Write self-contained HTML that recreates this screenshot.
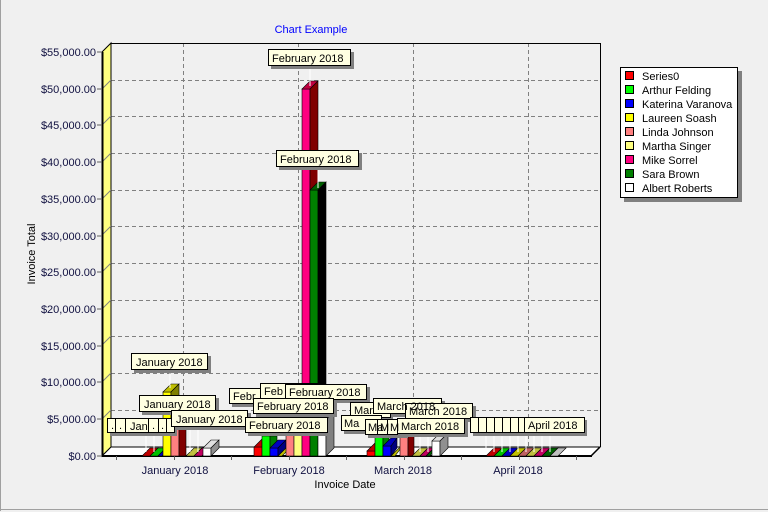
<!DOCTYPE html>
<html><head><meta charset="utf-8"><style>
html,body{margin:0;padding:0;background:#f0f0f0;}
svg{display:block;font-family:"Liberation Sans",sans-serif;}
</style></head><body>
<svg width="768" height="512" viewBox="0 0 768 512" xmlns="http://www.w3.org/2000/svg">
<defs>
<g id="dummy"></g>
</defs>
<rect x="0" y="0" width="768" height="512" fill="#f0f0f0"/>
<line x1="0.5" y1="0" x2="0.5" y2="511" stroke="#a0a0a0"/>
<line x1="0" y1="509.5" x2="768" y2="509.5" stroke="#a0a0a0"/>
<text x="311" y="33" font-size="11" fill="#0000ff" text-anchor="middle">Chart Example</text>

<!-- back wall grid -->
<g stroke="#808080" stroke-dasharray="4,3" stroke-width="1">
<line x1="111" y1="410.5" x2="600" y2="410.5"/>
<line x1="111" y1="373.5" x2="600" y2="373.5"/>
<line x1="111" y1="336.5" x2="600" y2="336.5"/>
<line x1="111" y1="300.5" x2="600" y2="300.5"/>
<line x1="111" y1="263.5" x2="600" y2="263.5"/>
<line x1="111" y1="226.5" x2="600" y2="226.5"/>
<line x1="111" y1="190.5" x2="600" y2="190.5"/>
<line x1="111" y1="153.5" x2="600" y2="153.5"/>
<line x1="111" y1="116.5" x2="600" y2="116.5"/>
<line x1="111" y1="80.5" x2="600" y2="80.5"/>
<line x1="183.5" y1="43" x2="183.5" y2="447"/>
<line x1="298.5" y1="43" x2="298.5" y2="447"/>
<line x1="413.5" y1="43" x2="413.5" y2="447"/>
<line x1="528.5" y1="43" x2="528.5" y2="447"/>
</g>
<line x1="111" y1="43.5" x2="600" y2="43.5" stroke="#000"/>
<line x1="600.5" y1="43" x2="600.5" y2="447" stroke="#000"/>
<!-- left wall -->
<polygon points="102,52 111,43 111,447 102,456" fill="#ffff80" stroke="#000" stroke-width="1"/>
<g stroke="#808080" stroke-width="1">
<line x1="102" y1="419" x2="111" y2="410"/><line x1="102" y1="382" x2="111" y2="373"/>
<line x1="102" y1="345" x2="111" y2="336"/><line x1="102" y1="309" x2="111" y2="300"/>
<line x1="102" y1="272" x2="111" y2="263"/><line x1="102" y1="235" x2="111" y2="226"/>
<line x1="102" y1="199" x2="111" y2="190"/><line x1="102" y1="162" x2="111" y2="153"/>
<line x1="102" y1="125" x2="111" y2="116"/><line x1="102" y1="89" x2="111" y2="80"/>
</g>
<line x1="102.5" y1="52" x2="102.5" y2="457" stroke="#000" stroke-width="2"/>
<!-- floor -->
<polygon points="102,456 111,447 600,447 591,456" fill="#fff" stroke="#000"/>
<line x1="102" y1="456" x2="592" y2="456" stroke="#000" stroke-width="2"/>
<line x1="591" y1="456" x2="600" y2="447" stroke="#000" stroke-width="1.5"/>

<!-- y axis labels -->
<g font-size="11" fill="#101040" text-anchor="end">
<text x="96" y="460">$0.00</text>
<text x="96" y="423">$5,000.00</text>
<text x="96" y="386">$10,000.00</text>
<text x="96" y="350">$15,000.00</text>
<text x="96" y="313">$20,000.00</text>
<text x="96" y="276">$25,000.00</text>
<text x="96" y="240">$30,000.00</text>
<text x="96" y="203">$35,000.00</text>
<text x="96" y="166">$40,000.00</text>
<text x="96" y="129">$45,000.00</text>
<text x="96" y="93">$50,000.00</text>
<text x="96" y="56">$55,000.00</text>
</g>
<g stroke="#606060">
<line x1="97" y1="456" x2="102" y2="456"/><line x1="97" y1="419" x2="102" y2="419"/>
<line x1="97" y1="382" x2="102" y2="382"/><line x1="97" y1="346" x2="102" y2="346"/>
<line x1="97" y1="309" x2="102" y2="309"/><line x1="97" y1="272" x2="102" y2="272"/>
<line x1="97" y1="236" x2="102" y2="236"/><line x1="97" y1="199" x2="102" y2="199"/>
<line x1="97" y1="162" x2="102" y2="162"/><line x1="97" y1="125" x2="102" y2="125"/>
<line x1="97" y1="89" x2="102" y2="89"/><line x1="97" y1="52" x2="102" y2="52"/>
<line x1="116.5" y1="456" x2="116.5" y2="460"/><line x1="174.5" y1="456" x2="174.5" y2="460"/>
<line x1="231.5" y1="456" x2="231.5" y2="460"/><line x1="289.5" y1="456" x2="289.5" y2="460"/>
<line x1="346.5" y1="456" x2="346.5" y2="460"/><line x1="404.5" y1="456" x2="404.5" y2="460"/>
<line x1="461.5" y1="456" x2="461.5" y2="460"/><line x1="519.5" y1="456" x2="519.5" y2="460"/>
<line x1="576.5" y1="456" x2="576.5" y2="460"/>
</g>
<g font-size="11" fill="#101040" text-anchor="middle">
<text x="175" y="474">January 2018</text>
<text x="289" y="474">February 2018</text>
<text x="403" y="474">March 2018</text>
<text x="518" y="474">April 2018</text>
<text x="345" y="488" fill="#000">Invoice Date</text>
</g>
<text transform="translate(35,254) rotate(-90)" font-size="11" text-anchor="middle" fill="#000">Invoice Total</text>

<!-- Bars: front rect, side, top -->
<g stroke="#000" stroke-width="0.6">
<!-- January stubs -->
<polygon points="142,456 150,448 158,448 150,456" fill="#c00000"/>
<polygon points="150,456 158,448 166,448 158,456" fill="#00c000"/>
<polygon points="158,456 166,448 170,448 162,456" fill="#0000c0"/>
<!-- Jan yellow tall -->
<rect x="163" y="392" width="8" height="64" fill="#ffff00"/>
<polygon points="163,392 171,384 179,384 171,392" fill="#c0c000"/>
<polygon points="171,392 179,384 179,448 171,456" fill="#808000"/>
<!-- Jan pink -->
<rect x="171" y="428" width="8" height="28" fill="#ff8080"/>
<rect x="179" y="420" width="7" height="36" fill="#800000"/>
<polygon points="186,456 194,448 202,448 194,456" fill="#c0c040"/>
<polygon points="194,456 202,448 210,448 202,456" fill="#c00060"/>
<polygon points="202,456 208,450 214,448 206,456" fill="#006000"/>
<!-- Jan white -->
<rect x="203" y="448" width="8" height="8" fill="#fff"/>
<polygon points="203,448 211,440 219,440 211,448" fill="#e0e0e0"/>
<polygon points="211,448 219,440 219,448 211,456" fill="#909090"/>

<!-- February -->
<rect x="254" y="447" width="8" height="9" fill="#ff0000"/>
<polygon points="254,447 262,439 262,447" fill="#c00000"/>
<rect x="262" y="436" width="8" height="20" fill="#00ff00"/>
<rect x="270" y="436" width="7" height="20" fill="#008000"/>
<rect x="270" y="448" width="8" height="8" fill="#0000ff"/>
<polygon points="270,448 278,440 286,440 278,448" fill="#0000c0"/>
<polygon points="278,456 286,448 286,440 278,448" fill="#000080"/>
<polygon points="278,456 286,448 290,448 282,456" fill="#c0c000"/>
<rect x="286" y="434" width="8" height="22" fill="#ff8080"/>
<rect x="294" y="434" width="8" height="22" fill="#ffff80"/>
<!-- Mike magenta tall -->
<rect x="302" y="89" width="8" height="367" fill="#ff0080"/>
<polygon points="302,89 310,81 318,81 310,89" fill="#c00040"/>
<polygon points="310,89 318,81 318,448 310,456" fill="#800000"/>
<!-- Sara green -->
<rect x="310" y="190" width="8" height="266" fill="#008000"/>
<polygon points="310,190 318,182 326,182 318,190" fill="#006000"/>
<polygon points="318,190 326,182 326,448 318,456" fill="#000"/>
<!-- white -->
<rect x="318" y="420" width="8" height="36" fill="#fff"/>
<polygon points="326,420 334,412 334,448 326,456" fill="#808080"/>

<!-- March -->
<rect x="367" y="451" width="8" height="5" fill="#ff0000"/>
<polygon points="367,451 375,443 375,451" fill="#c00000"/>
<rect x="375" y="435" width="8" height="21" fill="#00ff00"/>
<rect x="383" y="435" width="6" height="21" fill="#008000"/>
<rect x="383" y="446" width="8" height="10" fill="#0000ff"/>
<polygon points="383,446 391,438 397,438 391,446" fill="#0000c0"/>
<polygon points="391,446 397,438 397,448 391,456" fill="#000080"/>
<polygon points="391,456 399,448 401,448 395,456" fill="#c0c000"/>
<rect x="400" y="432" width="8" height="24" fill="#ff8080"/>
<polygon points="400,432 408,424 414,424 408,432" fill="#c06060"/>
<rect x="408" y="428" width="6" height="28" fill="#800000"/>
<polygon points="412,456 420,448 428,448 420,456" fill="#c0c040"/>
<polygon points="420,456 428,448 434,448 426,456" fill="#c00060"/>
<polygon points="426,456 432,450 436,448 430,456" fill="#006000"/>
<rect x="432" y="441" width="8" height="15" fill="#fff"/>
<polygon points="432,441 440,433 448,433 440,441" fill="#e0e0e0"/>
<polygon points="440,441 448,433 448,448 440,456" fill="#909090"/>

<!-- April stubs -->
<polygon points="486,456 494,448 502,448 494,456" fill="#c00000"/>
<polygon points="494,456 502,448 510,448 502,456" fill="#00c000"/>
<polygon points="502,456 510,448 518,448 510,456" fill="#0000c0"/>
<polygon points="510,456 518,448 526,448 518,456" fill="#c0c000"/>
<polygon points="518,456 526,448 534,448 526,456" fill="#c06060"/>
<polygon points="526,456 534,448 542,448 534,456" fill="#c0c040"/>
<polygon points="534,456 542,448 550,448 542,456" fill="#c00060"/>
<polygon points="542,456 550,448 558,448 550,456" fill="#006000"/>
<polygon points="550,456 558,448 566,448 558,456" fill="#c0c0c0"/>
</g>

<!-- leader lines -->
<g stroke="#fff" stroke-width="1">
<line x1="310" y1="66" x2="310" y2="86"/>
<line x1="318" y1="167" x2="318" y2="188"/>
<line x1="170" y1="370" x2="170" y2="388"/>
<line x1="146" y1="432" x2="146" y2="452"/><line x1="154" y1="432" x2="154" y2="452"/>
<line x1="190" y1="427" x2="190" y2="452"/><line x1="198" y1="427" x2="198" y2="452"/>
<line x1="486" y1="433" x2="486" y2="452"/><line x1="494" y1="433" x2="494" y2="452"/>
<line x1="502" y1="433" x2="502" y2="452"/><line x1="510" y1="433" x2="510" y2="452"/>
<line x1="518" y1="433" x2="518" y2="452"/><line x1="526" y1="433" x2="526" y2="452"/>
<line x1="534" y1="433" x2="534" y2="452"/><line x1="542" y1="433" x2="542" y2="452"/>
<line x1="550" y1="433" x2="550" y2="452"/>
<line x1="420" y1="434" x2="420" y2="452"/><line x1="428" y1="434" x2="428" y2="452"/>
</g>

<!-- label boxes -->
<g font-size="11" fill="#000">
<g fill="#808080">
<rect x="110" y="421" width="8" height="15"/><rect x="118" y="421" width="10" height="15"/>
<rect x="128" y="421" width="23" height="15"/><rect x="151" y="421" width="10" height="15"/>
<rect x="161" y="421" width="8" height="15"/><rect x="169" y="421" width="8" height="15"/>
<rect x="134" y="356" width="77" height="17"/>
<rect x="142" y="398" width="77" height="17"/>
<rect x="174" y="413" width="77" height="17"/>
<rect x="271" y="52" width="83" height="17"/>
<rect x="279" y="153" width="83" height="17"/>
<rect x="232" y="391" width="60" height="16"/>
<rect x="263" y="386" width="60" height="16"/>
<rect x="288" y="387" width="82" height="16"/>
<rect x="256" y="401" width="81" height="16"/>
<rect x="248" y="420" width="83" height="16"/>
<rect x="353" y="405" width="40" height="16"/>
<rect x="344" y="418" width="40" height="16"/>
<rect x="376" y="401" width="69" height="16"/>
<rect x="408" y="406" width="68" height="16"/>
<rect x="368" y="422" width="40" height="16"/>
<rect x="400" y="421" width="68" height="16"/>
<rect x="473" y="420" width="56" height="16"/>
<rect x="527" y="420" width="60" height="16"/>
</g>
<g fill="#ffffe1" stroke="#000" stroke-width="1">
<rect x="107.5" y="418.5" width="8" height="14"/><rect x="115.5" y="418.5" width="10" height="14"/>
<rect x="125.5" y="418.5" width="23" height="14"/><rect x="148.5" y="418.5" width="10" height="14"/>
<rect x="158.5" y="418.5" width="8" height="14"/><rect x="166.5" y="418.5" width="8" height="14"/>
<rect x="131.5" y="353.5" width="76" height="16"/>
<rect x="139.5" y="395.5" width="76" height="16"/>
<rect x="171.5" y="410.5" width="76" height="16"/>
<rect x="268.5" y="49.5" width="82" height="16"/>
<rect x="276.5" y="150.5" width="82" height="16"/>
<rect x="229.5" y="388.5" width="60" height="15"/>
<rect x="260.5" y="383.5" width="60" height="15"/>
<rect x="285.5" y="384.5" width="81" height="15"/>
<rect x="253.5" y="398.5" width="80" height="15"/>
<rect x="245.5" y="417.5" width="82" height="15"/>
<rect x="350.5" y="402.5" width="40" height="15"/>
<rect x="341.5" y="415.5" width="40" height="15"/>
<rect x="373.5" y="398.5" width="68" height="15"/>
<rect x="405.5" y="403.5" width="67" height="15"/>
<rect x="365.5" y="419.5" width="12" height="15"/><rect x="377.5" y="419.5" width="10" height="15"/>
<rect x="387.5" y="419.5" width="10" height="15"/>
<rect x="397.5" y="418.5" width="67" height="15"/>
<rect x="470.5" y="417.5" width="8" height="15"/><rect x="478.5" y="417.5" width="8" height="15"/>
<rect x="486.5" y="417.5" width="8" height="15"/><rect x="494.5" y="417.5" width="8" height="15"/>
<rect x="502.5" y="417.5" width="8" height="15"/><rect x="510.5" y="417.5" width="8" height="15"/>
<rect x="518.5" y="417.5" width="6" height="15"/>
<rect x="524.5" y="417.5" width="60" height="15"/>
</g>
<text x="111" y="429">.</text><text x="119" y="429">.</text>
<text x="130" y="430">Jan</text>
<text x="152" y="429">.</text><text x="161" y="429">.</text>
<text x="136" y="366">January 2018</text>
<text x="144" y="408">January 2018</text>
<text x="176" y="423">January 2018</text>
<text x="272" y="62">February 2018</text>
<text x="280" y="163">February 2018</text>
<text x="233" y="400">Febr</text>
<text x="264" y="395">Feb</text>
<text x="289" y="396">February 2018</text>
<text x="257" y="410">February 2018</text>
<text x="249" y="429">February 2018</text>
<text x="354" y="414">Mar</text>
<text x="344" y="427">Ma</text>
<text x="377" y="410">March 2018</text>
<text x="409" y="415">March 2018</text>
<text x="368" y="431">Ma</text><text x="380" y="431">M</text><text x="390" y="431">M</text>
<text x="401" y="430">March 2018</text>
<text x="528" y="429">April 2018</text>
</g>

<!-- legend -->
<rect x="624" y="71" width="118" height="131" fill="#808080"/>
<rect x="620.5" y="67.5" width="117" height="130" fill="#fff" stroke="#000"/>
<g stroke="#000" stroke-width="1">
<rect x="625.5" y="71.5" width="8" height="8" fill="#ff0000"/>
<rect x="625.5" y="85.5" width="8" height="8" fill="#00ff00"/>
<rect x="625.5" y="99.5" width="8" height="8" fill="#0000ff"/>
<rect x="625.5" y="113.5" width="8" height="8" fill="#ffff00"/>
<rect x="625.5" y="127.5" width="8" height="8" fill="#ff8080"/>
<rect x="625.5" y="141.5" width="8" height="8" fill="#ffff80"/>
<rect x="625.5" y="155.5" width="8" height="8" fill="#ff0080"/>
<rect x="625.5" y="169.5" width="8" height="8" fill="#008000"/>
<rect x="625.5" y="183.5" width="8" height="8" fill="#ffffff"/>
</g>
<g font-size="11" fill="#000">
<text x="642" y="80">Series0</text>
<text x="642" y="94">Arthur Felding</text>
<text x="642" y="108">Katerina Varanova</text>
<text x="642" y="122">Laureen Soash</text>
<text x="642" y="136">Linda Johnson</text>
<text x="642" y="150">Martha Singer</text>
<text x="642" y="164">Mike Sorrel</text>
<text x="642" y="178">Sara Brown</text>
<text x="642" y="192">Albert Roberts</text>
</g>
</svg>
</body></html>
